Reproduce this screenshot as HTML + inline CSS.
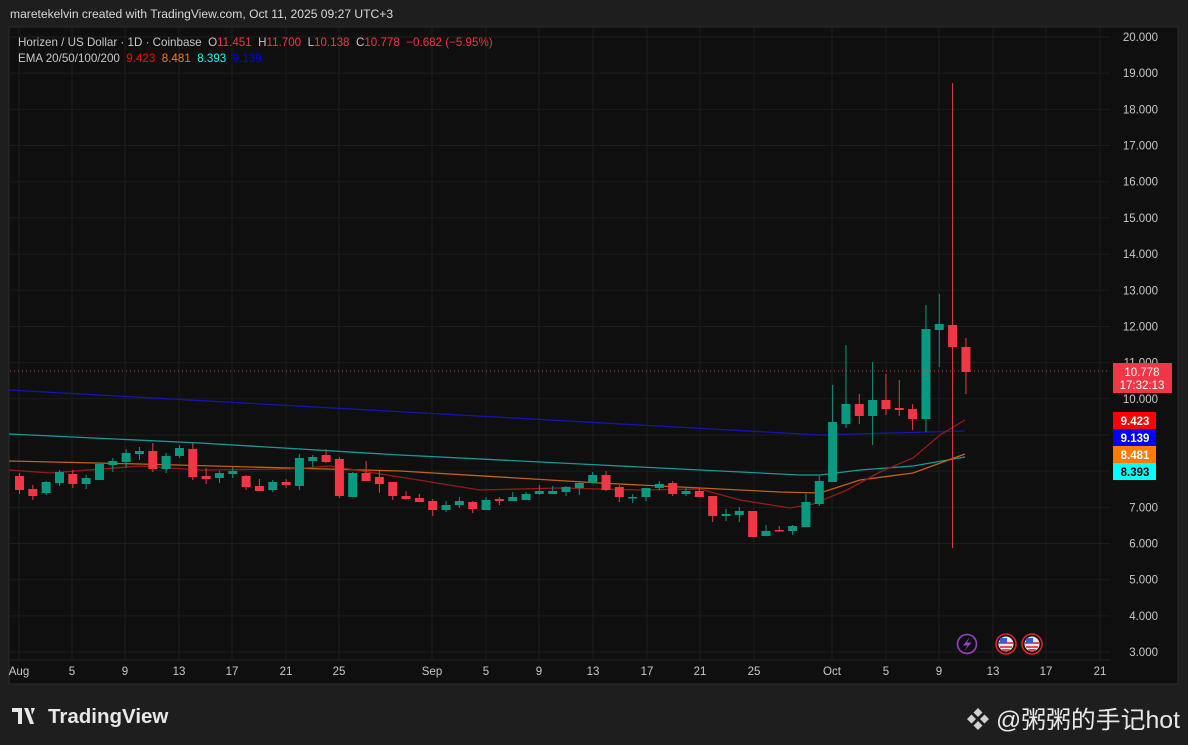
<!DOCTYPE html>
<html><head><meta charset="utf-8"><style>
html,body{margin:0;padding:0;background:#1e1e1e;width:1188px;height:745px;overflow:hidden;font-family:"Liberation Sans","Noto Sans CJK SC",sans-serif}
#hdr{position:absolute;left:10px;top:7px;color:#d8d8d8;font-size:12.1px}
svg{position:absolute;left:0;top:0}
</style></head><body>
<div id="hdr">maretekelvin created with TradingView.com, Oct 11, 2025 09:27 UTC+3</div>
<svg id="s" width="1188" height="745" xmlns="http://www.w3.org/2000/svg" font-family="Liberation Sans, Noto Sans CJK SC, sans-serif"></svg>
<script>
var s=document.getElementById('s');var h='';
h+='<rect x="9" y="27" width="1169" height="657" fill="#0f0f0f" stroke="#2b2b2b" stroke-width="1"/>';
var lab=['Aug','5','9','13','17','21','25','','Sep','5','9','13','17','21','25','','Oct','5','9','13','17','21'];
var xs=[19,72,125,179,232,286,339,0,432,486,539,593,647,700,754,0,832,886,939,993,1046,1100];
for(var i=0;i<xs.length;i++){if(!xs[i])continue;h+='<line x1="'+xs[i]+'" y1="28" x2="'+xs[i]+'" y2="660" stroke="#1c1c1c"/>';
h+='<text x="'+xs[i]+'" y="675" fill="#c8c8c8" font-size="11.5" text-anchor="middle">'+lab[i]+'</text>';}
for(var p=3;p<=20;p++){var y=37+(20-p)*36.18;h+='<line x1="10" y1="'+y+'" x2="1110" y2="'+y+'" stroke="#1c1c1c"/>';
if(p!=8&&p!=9)h+='<text x="1158" y="'+(y+4)+'" fill="#c8c8c8" font-size="11.5" text-anchor="end">'+p+'.000</text>';}
h+='<line x1="10" y1="660" x2="1110" y2="660" stroke="#262626"/>';
function pl(pts,c,w){h+='<polyline points="'+pts+'" fill="none" stroke="'+c+'" stroke-width="'+(w||1.3)+'"/>';}
pl('9,390 820,435 965,431','#1515b0');
pl('9,434 200,443 400,455 600,465 800,475 820,475 860,470 913,466 965,457','#159a9a');
pl('9,461 140,464 400,471 600,483 780,492 820,493 860,480 913,473 965,454','#c4620e');
pl('9,470 50,473 140,466 200,470 290,469 330,466 400,477 480,490 560,488 640,490 700,489 740,500 790,508 813,504 847,490 880,472 913,458 940,435 965,420','#9a1818');
var c=[['r',476,490,473,494],['r',489,496,485,500],['g',482,493,481,495],['g',472,483,470,486],['r',474,484,470,488],['g',478,484,475,489],['g',464,480,464,480],['g',461,465,458,472],['g',453,462,449,468],['g',451,454,447,460],['r',451,469,443,472],['g',456,469,453,473],['g',448,456,445,458],['r',449,477,443,480],['r',476,479,468,484],['g',473,478,471,483],['g',471,474,467,478],['r',476,487,475,490],['r',486,491,479,491],['g',482,490,480,492],['r',482,485,479,488],['g',458,486,454,490],['g',457,461,455,467],['r',455,462,449,463],['r',459,496,457,498],['g',473,497,472,497],['r',473,481,461,481],['r',477,484,471,493],['r',482,496,482,500],['r',496,499,491,500],['r',498,502,494,502],
['r',501,510,499,516],['g',505,510,501,512],['g',501,505,497,508],['r',502,509,501,513],['g',500,510,497,510],['r',499,501,497,505],['g',497,501,492,501],['g',494,500,492,500],['g',491,494,485,495],['g',491,494,486,494],['g',487,492,486,496],['g',483,488,482,495],['g',475,483,472,483],['r',475,490,471,491],['r',487,497,485,502],['g',497,498,494,503],['g',488,497,488,501],['g',484,488,481,490],['r',483,494,481,496],['g',491,494,488,496],['r',491,497,488,497],['r',496,516,496,522],['g',514,516,509,521],['g',511,515,507,522],['r',511,537,511,537],['g',531,536,525,536],['r',530,531,526,532],['g',526,531,525,535],
['g',502,527,494,527],['g',481,504,476,506],['g',422,482,385,482],['g',404,424,345,428],['r',404,416,394,424],['g',400,416,362,445],['r',400,409,374,415],['r',408,410,380,416],['r',409,419,404,430],['g',329,419,305,432],['g',324,330,294,367],['r',325,347,83,548],['r',347,372,338,394]];
for(var i=0;i<c.length;i++){var x=19.5+i*13.33;var col=c[i][0]=='g'?'#089981':'#f23645';
h+='<line x1="'+x+'" y1="'+c[i][3]+'" x2="'+x+'" y2="'+c[i][4]+'" stroke="'+col+'" stroke-width="1"/>';
h+='<rect x="'+(x-4.5)+'" y="'+c[i][1]+'" width="9" height="'+Math.max(1.5,c[i][2]-c[i][1])+'" fill="'+col+'"/>';}
h+='<line x1="10" y1="371" x2="1110" y2="371" stroke="#f23645" stroke-dasharray="1,3"/>';
h+='<rect x="1113" y="363" width="59" height="30" fill="#f23645"/><text x="1142" y="376" fill="#fff" font-size="11.5" text-anchor="middle">10.778</text><text x="1142" y="389" fill="#fff" font-size="11.5" text-anchor="middle">17:32:13</text>';
var eb=[['#ff0000','9.423','#fff'],['#0000ff','9.139','#fff'],['#ff7b00','8.481','#fff'],['#00ffff','8.393','#000']];
for(var i=0;i<4;i++){var y=412+i*17;h+='<rect x="1113" y="'+y+'" width="43" height="17" fill="'+eb[i][0]+'"/><text x="1135" y="'+(y+13)+'" fill="'+eb[i][2]+'" font-size="11.5" font-weight="bold" text-anchor="middle">'+eb[i][1]+'</text>';}
h+='<text x="18" y="46" font-size="11.6" fill="#c8c8c8" xml:space="preserve">Horizen / US Dollar · 1D · Coinbase  O<tspan fill="#f23645">11.451</tspan>  H<tspan fill="#f23645">11.700</tspan>  L<tspan fill="#f23645">10.138</tspan>  C<tspan fill="#f23645">10.778</tspan>  <tspan fill="#f23645">−0.682 (−5.95%)</tspan></text>';
h+='<text x="18" y="62" font-size="11.6" fill="#c8c8c8" xml:space="preserve">EMA 20/50/100/200  <tspan fill="#ff0000">9.423</tspan>  <tspan fill="#ff7b00">8.481</tspan>  <tspan fill="#00ffff">8.393</tspan>  <tspan fill="#0000ff">9.139</tspan></text>';
h+='<circle cx="967" cy="644" r="9.5" fill="none" stroke="#9c3fc4" stroke-width="1.6"/><path d="M970 637 L963 645.5 L967.5 645.5 L964.5 651 L971.5 642.5 L967 642.5 Z" fill="#9c3fc4"/>';
[1006,1032].forEach(function(x){h+='<circle cx="'+x+'" cy="644" r="10" fill="none" stroke="#e0202a" stroke-width="1.6"/><circle cx="'+x+'" cy="644" r="7.5" fill="#e8e8f0"/><path d="M'+(x-7)+' 643 h14 M'+(x-6)+' 647 h12 M'+(x-4)+' 650 h8" stroke="#e03a3a" stroke-width="1.8"/><rect x="'+(x-6)+'" y="638" width="7" height="5" fill="#3a5bd8"/>';});
h+='<path d="M12 708 h10 v16 h-4 v-12 h-6z M24 708 h4 l6 16 h-4z M31 708 h4 l-3 7z" fill="#e8e8e8"/>';
h+='<text x="48" y="723" font-size="20.5" font-weight="bold" fill="#e8e8e8">TradingView</text>';
h+='<g transform="translate(978,719)" fill="#d0d0d0"><path d="M0 -11 L4.5 -6.5 L0 -2 L-4.5 -6.5Z M-11 0 L-6.5 -4.5 L-2 0 L-6.5 4.5Z M11 0 L6.5 -4.5 L2 0 L6.5 4.5Z M0 11 L4.5 6.5 L0 2 L-4.5 6.5Z"/></g>';
h+='<text x="996" y="728" font-size="24" fill="#e8e8e8" textLength="184" lengthAdjust="spacingAndGlyphs">@粥粥的手记hot</text>';
s.innerHTML=h;
</script>
</body></html>
